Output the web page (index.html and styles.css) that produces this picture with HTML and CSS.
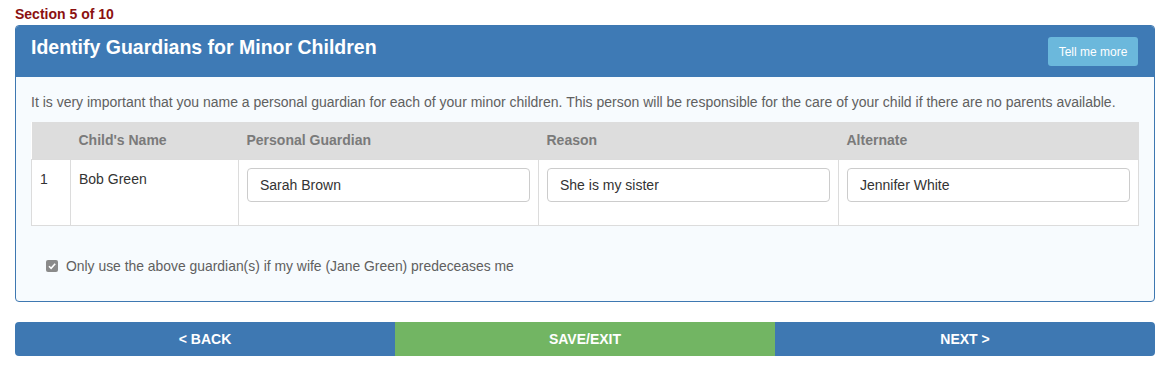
FILE: index.html
```html
<!DOCTYPE html>
<html>
<head>
<meta charset="utf-8">
<link rel="stylesheet" href="styles.css">
</head>
<body>
<div class="page">
  <div class="section-label">Section 5 of 10</div>
  <div class="panel">
    <div class="panel-head">
      <h2 class="panel-title">Identify Guardians for Minor Children</h2>
      <button class="info-btn">Tell me more</button>
    </div>
    <div class="panel-body">
      <p class="intro">It is very important that you name a personal guardian for each of your minor children. This person will be responsible for the care of your child if there are no parents available.</p>
      <table class="grid">
        <thead>
          <tr>
            <th class="c-num"></th>
            <th class="c-name">Child's Name</th>
            <th class="c-field">Personal Guardian</th>
            <th class="c-field">Reason</th>
            <th class="c-field">Alternate</th>
          </tr>
        </thead>
        <tbody>
          <tr>
            <td class="c-num">1</td>
            <td class="c-name">Bob Green</td>
            <td class="c-field"><input class="field" type="text" value="Sarah Brown"></td>
            <td class="c-field"><input class="field" type="text" value="She is my sister"></td>
            <td class="c-field"><input class="field" type="text" value="Jennifer White"></td>
          </tr>
        </tbody>
      </table>
      <label class="check-row"><span class="box"><svg viewBox="0 0 12 12" width="12" height="12"><rect x="0" y="0" width="12" height="12" rx="2" fill="#8a8a8a"/><path d="M3 6.2 L5.1 8.3 L9.2 3.8" fill="none" stroke="#fff" stroke-width="1.6"/></svg></span>Only use the above guardian(s) if my wife (Jane Green) predeceases me</label>
    </div>
  </div>
  <div class="nav">
    <button class="nav-btn back">&lt; BACK</button>
    <button class="nav-btn save">SAVE/EXIT</button>
    <button class="nav-btn next">NEXT &gt;</button>
  </div>
</div>
</body>
</html>
```
FILE: styles.css
```css
* { box-sizing: border-box; }
html, body { margin: 0; padding: 0; background: #fff; }
body { font-family: "Liberation Sans", Arial, Helvetica, sans-serif; color: #555; }
.page { padding: 6px 15px 0 15px; width: 1170px; }
.section-label { color: #8b1010; font-weight: bold; font-size: 14px; line-height: 17px; height: 19px; padding-left: 0; }
.panel { border: 1px solid #3e78b1; border-radius: 4px; background: #f7fbfe; overflow: hidden; }
.panel-head { background: #3e7ab5; height: 51px; display: flex; justify-content: space-between; align-items: flex-start; padding: 0 16px 0 15px; }
.panel-title { margin: 0; padding-top: 10px; color: #fff; font-size: 19.5px; font-weight: bold; line-height: 22px; }
.info-btn { margin-top: 11px; background: #6bb8dc; color: #fff; border: 0; border-radius: 3px; font-family: inherit; font-size: 12px; height: 29px; width: 90px; padding: 0; }
.panel-body { padding: 17px 16px 0 15px; height: 224px; }
.intro { margin: 0 0 11px 0; font-size: 14px; line-height: 17px; color: #606060; }
.grid { width: 1107px; border-collapse: collapse; background: #fff; table-layout: fixed; }
.grid th { background: #dddddd; color: #7a7a7a; font-size: 14px; font-weight: bold; text-align: left; height: 37px; padding: 0 8px; }
.grid td { border: 1px solid #dcdcdc; vertical-align: top; font-size: 14px; color: #333; padding: 11px 8px; height: 66px; }
.grid td.c-field { padding: 8px 8px 0 8px; }
.c-num { width: 39px; }
.c-name { width: 168px; }
.c-field { width: 300px; }
.field { width: 100%; height: 34px; border: 1px solid #ccc; border-radius: 4px; padding: 0 12px; font-family: inherit; font-size: 14px; color: #333; background: #fff; display: block; }
.check-row { display: flex; align-items: center; margin: 31px 0 0 15px; font-size: 13.9px; color: #606060; line-height: 18px; }
.box { display: inline-flex; margin-right: 8px; }
.nav { display: flex; margin-top: 20px; height: 34px; }
.nav-btn { flex: 1; border: 0; color: #fff; font-family: inherit; font-weight: bold; font-size: 14px; height: 34px; padding: 0; }
.back { background: #3e78b2; border-radius: 4px 0 0 4px; }
.save { background: #72b563; }
.next { background: #3e78b2; border-radius: 0 4px 4px 0; }
```
